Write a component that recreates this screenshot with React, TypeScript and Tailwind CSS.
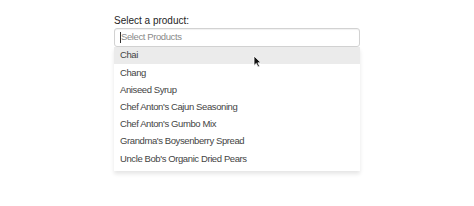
import { useState } from "react";

const products = [
  "Chai",
  "Chang",
  "Aniseed Syrup",
  "Chef Anton's Cajun Seasoning",
  "Chef Anton's Gumbo Mix",
  "Grandma's Boysenberry Spread",
  "Uncle Bob's Organic Dried Pears",
];

export default function App() {
  const [hovered, setHovered] = useState(0);

  return (
    <div className="relative w-[474px] h-[206px] bg-white font-['Liberation_Sans',Arial,sans-serif]">
      <div className="pt-[15px] pl-[114px] w-[360px]">
        <label className="block text-[10px] leading-[12px] text-[#1e1e1e] mb-[1px]">Select a product:</label>
        <div className="h-[19px] border border-[#d2d2d2] rounded-[3px] shadow-[inset_0_1px_1px_rgba(0,0,0,0.06)] flex items-center pl-[5px]">
          <span className="w-px h-[11px] bg-[#333]" />
          <span className="text-[9.5px] tracking-[-0.4px] text-[#8a8a8a]">Select Products</span>
        </div>
        <ul className="pb-[4px] shadow-[0_3px_4px_rgba(0,0,0,0.1)] bg-white">
          {products.map((p, idx) => (
            <li
              key={p}
              onMouseEnter={() => setHovered(idx)}
              className={`h-[17.2px] flex items-center pl-[6px] text-[9.5px] tracking-[-0.4px] text-[#444] ${hovered === idx ? "bg-[#ebebeb]" : ""}`}
            >
              {p}
            </li>
          ))}
        </ul>
      </div>

      {/* mouse pointer */}
      <svg className="absolute left-[253px] top-[55px]" width="9" height="13" viewBox="0 0 9 13">
        <path d="M1 1 L1 10.5 L3.3 8.4 L5 12 L6.6 11.3 L4.9 7.8 L8 7.8 Z" fill="#111" stroke="#fff" strokeWidth="0.8" />
      </svg>
    </div>
  );
}
